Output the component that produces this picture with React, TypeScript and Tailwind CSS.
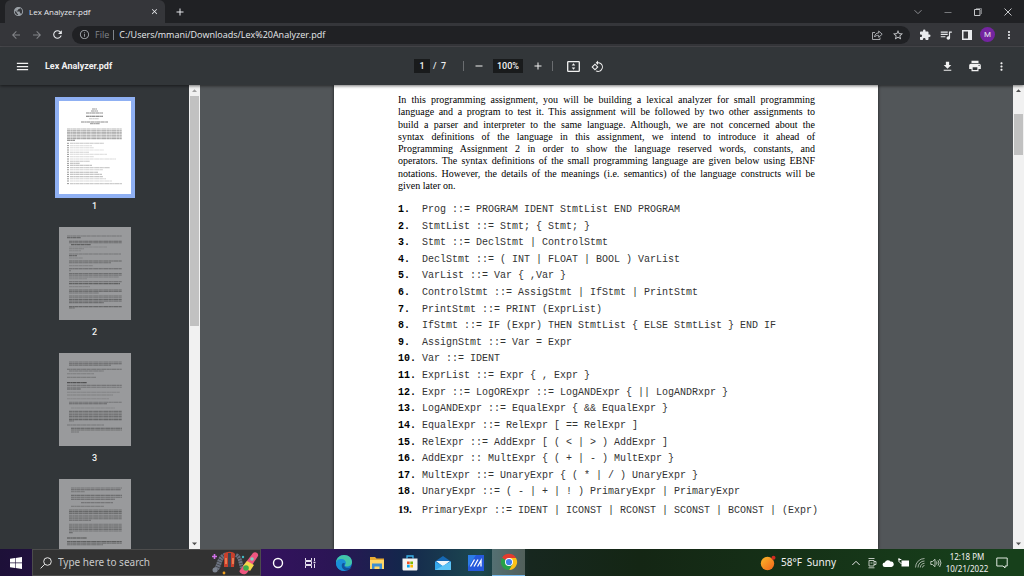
import { Fragment, type ReactNode } from "react";
import {
  MdAdd,
  MdArrowBack,
  MdArrowForward,
  MdClose,
  MdExtension,
  MdFileDownload,
  MdInfoOutline,
  MdMenu,
  MdMoreVert,
  MdOutlineRotate90DegreesCcw,
  MdPrint,
  MdPublic,
  MdQueueMusic,
  MdRefresh,
  MdRemove,
  MdStarBorder,
} from "react-icons/md";

const intro = [
  "In this programming assignment, you will be building a lexical analyzer for small programming",
  "language and a program to test it. This assignment will be followed by two other assignments to",
  "build a parser and interpreter to the same language. Although, we are not concerned about the",
  "syntax definitions of the language in this assignment, we intend to introduce it ahead of",
  "Programming Assignment 2 in order to show the language reserved words, constants, and",
  "operators. The syntax definitions of the small programming language are given below using EBNF",
  "notations. However, the details of the meanings (i.e. semantics) of the language constructs will be",
];

const rules = [
  "Prog ::= PROGRAM IDENT StmtList END PROGRAM",
  "StmtList ::= Stmt; { Stmt; }",
  "Stmt ::= DeclStmt | ControlStmt",
  "DeclStmt ::= ( INT | FLOAT | BOOL ) VarList",
  "VarList ::= Var { ,Var }",
  "ControlStmt ::= AssigStmt | IfStmt | PrintStmt",
  "PrintStmt ::= PRINT (ExprList)",
  "IfStmt ::= IF (Expr) THEN StmtList { ELSE StmtList } END IF",
  "AssignStmt ::= Var = Expr",
  "Var ::= IDENT",
  "ExprList ::= Expr { , Expr }",
  "Expr ::= LogORExpr ::= LogANDExpr { || LogANDRxpr }",
  "LogANDExpr ::= EqualExpr { && EqualExpr }",
  "EqualExpr ::= RelExpr [ == RelExpr ]",
  "RelExpr ::= AddExpr [ ( < | > ) AddExpr ]",
  "AddExpr :: MultExpr { ( + | - ) MultExpr }",
  "MultExpr ::= UnaryExpr { ( * | / ) UnaryExpr }",
  "UnaryExpr ::= ( - | + | ! ) PrimaryExpr | PrimaryExpr",
  "PrimaryExpr ::= IDENT | ICONST | RCONST | SCONST | BCONST | (Expr)",
];

// One strip of miniature text: x, width, y, opacity
type Strip = [number, number, number, number];

const thumbs: { page: number; strips: Strip[] }[] = [
  {
    page: 1,
    strips: [
      [33, 5, 8, 0.7], [32, 7, 10, 0.7], [27, 17, 12, 0.8], [27, 17, 15.3, 1], [30, 10, 17.7, 0.4],
      [22, 27, 21, 0.8], [31, 10, 22.6, 0.6],
      [8, 55, 28, 0.5], [8, 55, 29.6, 0.5], [8, 55, 31.2, 0.7], [8, 55, 32.8, 0.6], [8, 55, 34.4, 0.5],
      [8, 55, 36, 0.7], [8, 55, 37.6, 0.6], [8, 8, 39.4, 0.7],
      [11, 34, 42.3, 0.4], [11, 22, 44.6, 0.2], [11, 24, 46.8, 0.25], [11, 34, 49, 0.2], [11, 19, 51.2, 0.3],
      [11, 37, 53.4, 0.2], [11, 24, 55.6, 0.2], [11, 46, 58, 0.25], [11, 20, 60.2, 0.4], [11, 10, 62.4, 0.4],
      [11, 22, 64.4, 0.4], [11, 40, 66.6, 0.35], [11, 33, 68.8, 0.3], [11, 28, 71.2, 0.5], [11, 32, 73.4, 0.4],
      [11, 33, 75.6, 0.4], [11, 36, 77.8, 0.3], [11, 42, 80, 0.25], [11, 52, 82.6, 0.35],
    ],
  },
  {
    page: 2,
    strips: [
      [8, 55, 9, 0.5], [8, 14, 10.6, 0.7], [10, 53, 14.3, 0.7], [10, 53, 15.8, 0.6], [12, 20, 17.6, 0.8],
      [10, 38, 20, 0.25], [10, 15, 21.8, 0.4], [10, 12, 23.8, 0.3], [10, 52, 27, 0.5], [10, 8, 28.6, 0.7],
      [10, 14, 31, 0.3], [10, 53, 34, 0.7], [10, 42, 35.8, 0.6], [10, 24, 38.6, 0.3], [10, 53, 41.8, 0.7],
      [10, 2, 43.8, 0.5], [10, 53, 46.6, 0.6], [10, 53, 48.2, 0.5], [10, 50, 50, 0.4], [10, 18, 51.8, 0.3],
      [10, 53, 54.6, 0.5], [10, 51, 56.6, 0.8], [10, 21, 59.6, 0.3], [10, 53, 63, 0.7], [10, 53, 64.5, 0.6],
      [10, 30, 66, 0.5], [10, 53, 69, 0.6], [10, 53, 70.8, 0.5], [10, 53, 72.6, 0.7], [10, 53, 74.2, 0.5],
      [10, 35, 75.6, 0.6], [10, 53, 79.6, 0.7], [10, 6, 81, 0.6],
    ],
  },
  {
    page: 3,
    strips: [
      [10, 53, 9, 0.5], [10, 53, 10.8, 0.7], [10, 42, 12.2, 0.6], [8, 55, 16.2, 0.6], [10, 35, 18, 0.5],
      [8, 27, 20.8, 0.4], [8, 29, 24.4, 0.4], [8, 20, 29.6, 1], [8, 55, 32.4, 0.5], [8, 55, 34.2, 0.5],
      [8, 14, 36, 0.8], [8, 53, 39.2, 0.3], [8, 46, 42, 0.35], [8, 42, 45.8, 0.25], [10, 53, 49.2, 0.5],
      [10, 38, 50.8, 0.7], [12, 44, 55, 0.25], [10, 53, 58.4, 0.6], [10, 53, 60, 0.6], [10, 53, 61.6, 0.5],
      [10, 53, 63.4, 0.6], [10, 53, 65, 0.5], [10, 53, 66.6, 0.7], [10, 5, 68, 0.5], [8, 37, 72, 0.5],
      [12, 51, 75.2, 0.8], [12, 51, 77, 0.6], [12, 8, 79, 0.5],
    ],
  },
  {
    page: 4,
    strips: [
      [12, 51, 9, 0.5], [12, 50, 10.8, 0.7], [12, 14, 12.6, 0.4], [12, 51, 16.4, 0.6], [12, 51, 18.2, 0.6],
      [12, 44, 20.2, 0.7], [22, 32, 23.6, 0.5], [12, 33, 27.4, 0.4], [10, 53, 31, 0.6], [10, 53, 32.6, 0.7],
      [10, 53, 34.4, 0.6], [10, 53, 36.2, 0.5], [10, 53, 38, 0.7], [10, 53, 39.8, 0.6], [10, 22, 41.4, 0.5],
      [10, 53, 45.2, 0.5], [10, 53, 47, 0.7], [10, 53, 48.8, 0.6], [10, 53, 50.4, 0.6], [10, 53, 52, 0.5],
      [10, 4, 53.6, 0.6], [8, 20, 59, 1], [8, 55, 62.6, 0.8], [8, 55, 64.2, 0.6], [8, 36, 65.8, 0.6],
    ],
  },
];

function IconButton({ label, className, children }: { label: string; className: string; children: ReactNode }) {
  return (
    <button type="button" aria-label={label} className={`flex shrink-0 items-center justify-center ${className}`}>
      {children}
    </button>
  );
}

function TabStrip() {
  return (
    <div className="flex h-[23px] bg-[#202124] text-[#e8eaed]">
      <div className="ml-[5px] flex w-40 items-center rounded-t-md bg-[#35363a] pl-2 pr-1.5">
        <MdPublic className="size-[11px] text-[#9aa0a6]" />
        <span className="ml-[5px] flex-1 font-['Open_Sans',sans-serif] text-[8px] leading-3">Lex Analyzer.pdf</span>
        <IconButton label="Close tab" className="size-[9px]">
          <MdClose className="size-[9px]" />
        </IconButton>
      </div>
      <IconButton label="New tab" className="w-[30px]">
        <MdAdd className="size-3" />
      </IconButton>
      <div className="ml-auto flex pr-px text-[#c4c6c9]">
        <IconButton label="Search tabs" className="w-[30px]">
          <svg viewBox="0 0 8 8" className="size-2 text-[#8b8d91]" fill="none" stroke="currentColor">
            <path d="M.5 2.2 4 5.7 7.5 2.2" />
          </svg>
        </IconButton>
        <IconButton label="Minimize" className="w-[30px]">
          <svg viewBox="0 0 8 8" className="size-2 text-[#77797c]" stroke="currentColor">
            <path d="M.5 4.5h7" />
          </svg>
        </IconButton>
        <IconButton label="Restore" className="w-[30px]">
          <svg viewBox="0 0 8 8" className="size-2" fill="none" stroke="currentColor">
            <path d="M2 .5h5.500V6" stroke="#77797c" />
            <path d="M.5 1.500h5.500v6H.5z" />
          </svg>
        </IconButton>
        <IconButton label="Close" className="w-[30px]">
          <svg viewBox="0 0 8 8" className="size-2" stroke="currentColor">
            <path d="m.5.5 7 7m0-7-7 7" />
          </svg>
        </IconButton>
      </div>
    </div>
  );
}

function AddressBar() {
  return (
    <div className="flex h-6 items-center border-b border-[#4a4b4f] bg-[#35363a] px-[5px] text-[#e8eaed]">
      <IconButton label="Back" className="w-[21px] text-[#828387]">
        <MdArrowBack className="size-3" />
      </IconButton>
      <IconButton label="Forward" className="w-[21px] text-[#828387]">
        <MdArrowForward className="size-3" />
      </IconButton>
      <IconButton label="Reload" className="w-[21px]">
        <MdRefresh className="size-[13px]" />
      </IconButton>
      <div className="mx-1 flex h-[18px] flex-1 items-center rounded-full bg-[#202124] pl-[7px] pr-[2px] font-['Open_Sans',sans-serif] text-[9px]">
        <MdInfoOutline className="size-[11px] text-[#9aa0a6]" />
        <span className="ml-[5px] text-[#80848a]">File</span>
        <span className="mx-1 h-[10px] w-px bg-[#80848a]" />
        <input
          aria-label="Address"
          defaultValue="C:/Users/mmani/Downloads/Lex%20Analyzer.pdf"
          className="ml-px min-w-0 flex-1 bg-transparent outline-none"
        />
        <IconButton label="Share" className="w-[21px] text-[#b4b7bb]">
          <svg viewBox="0 0 12 12" className="size-3" fill="none" stroke="currentColor" strokeWidth=".9">
            <path d="M4 3.500H1.500v7h7.500V8.500" />
            <path d="M3.500 8c.3-2.700 1.800-4 4.200-4V2l3.500 3.200L7.700 8.300V6.400C5.800 6.300 4.500 6.700 3.500 8z" />
          </svg>
        </IconButton>
        <IconButton label="Bookmark this page" className="w-[21px] text-[#d0d2d5]">
          <MdStarBorder className="size-3" />
        </IconButton>
      </div>
      <IconButton label="Extensions" className="w-[21px]">
        <MdExtension className="size-3" />
      </IconButton>
      <IconButton label="Media controls" className="w-[21px]">
        <MdQueueMusic className="size-[14px]" />
      </IconButton>
      <IconButton label="Side panel" className="w-[21px]">
        <svg viewBox="0 0 10 10" className="size-[10px]">
          <path d="M0 0h10v10H0zM1.500 1.500v7H6v-7z" fill="currentColor" fillRule="evenodd" />
        </svg>
      </IconButton>
      <IconButton label="Profile" className="w-[21px]">
        <span className="flex size-[15px] items-center justify-center rounded-full bg-[#7424a0] font-['Roboto',sans-serif] text-[8px] leading-none">
          M
        </span>
      </IconButton>
      <IconButton label="Menu" className="w-[21px]">
        <MdMoreVert className="size-3" />
      </IconButton>
    </div>
  );
}

function PdfToolbar() {
  return (
    <div className="relative z-10 flex h-[38px] items-center bg-[#323639] font-['Roboto',sans-serif] text-[9px] font-medium text-[#f1f1f1] shadow-[0_1px_3px_rgba(0,0,0,0.55)]">
      <div className="flex flex-1 items-center pl-[15px]">
        <IconButton label="Toggle sidebar" className="size-[15px]">
          <MdMenu className="size-[15px]" />
        </IconButton>
        <h1 className="ml-[15px] leading-3 font-bold">Lex Analyzer.pdf</h1>
      </div>
      <div className="flex items-center pr-[7px]">
        <input aria-label="Page number" defaultValue="1" className="h-[14px] w-4 bg-[#191b1c] text-center outline-none" />
        <span className="ml-[3px] w-[30px] leading-3 whitespace-pre">{"/  7"}</span>
        <span className="h-[10px] w-px bg-[#6a6d70]" />
        <IconButton label="Zoom out" className="w-[29px]">
          <MdRemove className="size-3" />
        </IconButton>
        <input aria-label="Zoom level" defaultValue="100%" className="h-[14px] w-[30px] bg-[#191b1c] text-center outline-none" />
        <IconButton label="Zoom in" className="w-[29px]">
          <MdAdd className="size-3" />
        </IconButton>
        <span className="h-[10px] w-px bg-[#6a6d70]" />
        <IconButton label="Fit to page" className="ml-2 w-6">
          <svg viewBox="0 0 13 11" className="h-[11px] w-[13px]">
            <rect x=".7" y=".7" width="11.600" height="9.600" rx=".6" fill="none" stroke="currentColor" strokeWidth="1.300" />
            <path d="M6.500 2.200 8.300 4.500H4.700zM6.500 8.800 4.700 6.500h3.600z" fill="currentColor" />
          </svg>
        </IconButton>
        <IconButton label="Rotate counterclockwise" className="w-6">
          <MdOutlineRotate90DegreesCcw className="size-[13px]" />
        </IconButton>
      </div>
      <div className="flex flex-1 justify-end pr-[9px]">
        <IconButton label="Download" className="w-[27px]">
          <MdFileDownload className="size-[13px]" />
        </IconButton>
        <IconButton label="Print" className="w-[27px]">
          <MdPrint className="size-[14px]" />
        </IconButton>
        <IconButton label="More actions" className="w-[27px]">
          <MdMoreVert className="size-[13px]" />
        </IconButton>
      </div>
    </div>
  );
}

function Arrow({ down, dim }: { down?: boolean; dim?: boolean }) {
  return (
    <svg viewBox="0 0 11 11" className={`h-[11px] w-[11px] shrink-0 ${dim ? "text-[#a3a3a3]" : "text-[#505050]"}`}>
      <path d={down ? "M3 4.500h5L5.500 7.200z" : "M3 7h5L5.500 4.200z"} fill="currentColor" />
    </svg>
  );
}

function Sidebar() {
  return (
    <aside className="flex w-[200px] shrink-0 bg-[#323639]">
      <div className="flex flex-1 flex-col items-center overflow-hidden pt-3">
        {thumbs.map(({ page, strips }) => (
          <a key={page} href={`#page-${page}`} aria-label={`Page ${page}`} className="mb-[11px] flex shrink-0 flex-col items-center">
            <div className={page === 1 ? "border-4 border-[#8fb0f3] bg-white" : "border-4 border-transparent bg-[#999a9c] bg-clip-padding"}>
              <svg viewBox="0 0 72 93" className="h-[93px] w-[72px]">
                {strips.map(([x, w, y, o], i) => (
                  <Fragment key={i}>
                    <path d={`M${x} ${y}h${w}`} stroke="#333" strokeWidth="1.100" strokeDasharray="3.200 .3 1.500 .25 4.300 .35" opacity={o * 0.7} />
                    {page === 1 && i > 14 && <path d={`M8 ${y}h2`} stroke="#333" opacity=".5" />}
                  </Fragment>
                ))}
              </svg>
            </div>
            {/* the last thumbnail runs under the fold */}
            {page < thumbs.length && (
              <span className="mt-[2px] h-3 font-['Roboto',sans-serif] text-[9px] leading-3 font-medium text-[#f1f1f1]">{page}</span>
            )}
          </a>
        ))}
      </div>
      <div className="flex w-[11px] flex-col bg-[#f1f1f1]">
        <Arrow dim />
        <div className="mx-px h-[230px] bg-[#c1c1c1]" />
        <div className="flex-1" />
        <Arrow down />
      </div>
    </aside>
  );
}

function Document() {
  return (
    <main className="flex min-w-0 flex-1 bg-[#525659]">
      <div className="flex min-w-0 flex-1 justify-center pr-px">
        <article className="w-[544px] bg-white pl-16 pr-[63px] pt-[9px] text-black shadow-[0_0_3px_rgba(0,0,0,0.7)]">
          <div className="flex h-[98px] flex-col justify-between font-['Liberation_Serif',serif] text-[10px] leading-3">
            {intro.map((line) => (
              <p key={line} className="text-justify whitespace-nowrap [text-align-last:justify]">
                {line}
              </p>
            ))}
            <p>given later on.</p>
          </div>
          <ol className="mt-3 flex h-[313px] flex-col justify-between font-['Liberation_Mono',monospace] text-[10px] leading-3">
            {rules.map((rule, i) => (
              <li key={rule} className="flex items-baseline whitespace-pre text-[#333]">
                <span className={`w-6 shrink-0 font-bold text-black ${i === 18 ? "font-['Liberation_Serif',serif] text-[11px]" : ""}`}>
                  {i + 1}.
                </span>
                <span>{rule}</span>
              </li>
            ))}
          </ol>
        </article>
      </div>
      <div className="flex w-[11px] flex-col bg-[#f1f1f1]">
        <Arrow />
        <div className="mx-px mt-[18px] h-[41px] bg-[#c1c1c1]" />
        <div className="flex-1" />
        <Arrow down />
      </div>
    </main>
  );
}

function SearchArt() {
  return (
    <svg viewBox="0 0 50 26" className="h-[26px] w-[50px]">
      <path d="M4.500 4v5M2 6.500h5" stroke="#d071e8" strokeWidth="1.600" />
      <path d="M16 5C9 7 10 14 6 20" stroke="#6b7280" strokeWidth="5" strokeDasharray="2 .6" fill="none" />
      <path d="M26 5c4 2 4 6 6 13" stroke="#6b7280" strokeWidth="4" strokeDasharray="2 .6" fill="none" />
      <circle cx="5" cy="20" r="2.500" fill="#7d8490" />
      <path d="M14 4c2-3 9-3 11 0l-1 13H14z" fill="#c8402c" />
      <path d="M18 3h3v14h-3z" fill="#3d4450" />
      <path d="M16 8v6M23 8v6" stroke="#ef8d5b" strokeWidth="1.500" />
      <path d="M30 20 43 3c2-2 6 0 5 3L37 23c-3 3-9 0-7-3z" fill="#ee5680" />
      <path d="m33 16 7 5 4-6-7-4z" fill="#f5d64b" />
      <circle cx="36" cy="18" r="2.800" fill="#3fae49" />
      <circle cx="42" cy="9" r="1.800" fill="#7fd0c2" />
      <circle cx="33" cy="7" r="1.200" fill="#43b9c4" />
      <circle cx="14" cy="23" r="1.400" fill="#f0a020" />
    </svg>
  );
}

const apps: { name: string; art: ReactNode }[] = [
  {
    name: "Cortana",
    art: <circle cx="9" cy="9" r="4.500" fill="none" stroke="#fff" strokeWidth="1.400" />,
  },
  {
    name: "Task View",
    art: (
      <g fill="none" stroke="#e6e0ee">
        <path d="M3.500 4v2.500h6V4M3.500 14v-2.500h6V14M3.500 7.500h6v3h-6zM12.500 4v3M12.500 10v4" />
        <path d="M11.500 8.500h2" strokeWidth="1.500" />
      </g>
    ),
  },
  {
    name: "Microsoft Edge",
    art: (
      <>
        <circle cx="9" cy="9" r="8" fill="#1479cc" />
        <path d="M1 9C1 4 5 1 9 1c5 0 8 3.300 8 7 0 3-2.500 4.500-5 4.500-1.800 0-2.600-.8-2-1.800.9-1.600 0-4.200-3-4.200C4 6.500 1.500 7.500 1 9z" fill="#43c6a8" />
        <path d="M1 9c.5-3 3-4.500 6-4 3.400.5 4.700 3.500 3.200 5.600C9 9 6.800 10 7 12.500c.2 2 2 3.500 4.500 4C6 18 1 14.500 1 9z" fill="#1a8fd8" />
        <path d="M7 10c-1 3 1 6 4.500 6.500 2.200-.2 4-1.500 5-3.300-3 1.500-6.500 1-7.300-1.200-.4-1 .3-2 .7-2.600C9 8.600 7.500 8.900 7 10z" fill="#12539c" />
      </>
    ),
  },
  {
    name: "File Explorer",
    art: (
      <>
        <path d="M2 3h5l1.500 1.500H16V15H2z" fill="#e8ab33" />
        <path d="M2 6h14v9H2z" fill="#ffd667" />
        <path d="M4 9.500h10V15h-2.500v-2.500h-5V15H4z" fill="#3f8fd2" />
      </>
    ),
  },
  {
    name: "Microsoft Store",
    art: (
      <>
        <path d="M6 4.500V2h6v2.500" fill="none" stroke="#3bb4ea" strokeWidth="1.300" />
        <path d="M1.500 4.500h15V15c0 1-.6 1.500-1.500 1.500H3c-.9 0-1.500-.5-1.500-1.500z" fill="#f3f3f3" />
        <path d="M6 7.500h2.700v2.700H6z" fill="#f25022" />
        <path d="M9.300 7.500H12v2.700H9.300z" fill="#7fba00" />
        <path d="M6 10.800h2.700v2.700H6z" fill="#00a4ef" />
        <path d="M9.300 10.800H12v2.700H9.300z" fill="#ffb900" />
      </>
    ),
  },
  {
    name: "Mail",
    art: (
      <>
        <path d="M1 7.500 9 2l8 5.500V16H1z" fill="#1668b3" />
        <path d="M2 7h14l-7 5.500z" fill="#f2f5f8" />
        <path d="M1 7.500 9 12l8-4.500V16H1z" fill="#35a6ea" />
        <path d="m1 16 16-8.500V16z" fill="#5cc3f5" />
      </>
    ),
  },
  {
    name: "MyASUS",
    art: (
      <>
        <path d="M1 1h16v16H1z" fill="#2659dc" />
        <path d="M1 1h8L1 13z" fill="#2c7ce8" />
        <path d="m3.500 12.500 4-7M7 12.500l4-7M10.500 12.500l3.500-6v6" stroke="#fff" strokeWidth="1.300" fill="none" />
      </>
    ),
  },
  {
    name: "Google Chrome",
    art: (
      <>
        <path d="M9 9 2 5a8 8 0 0 1 14 0z" fill="#e33b2e" />
        <path d="M9 5h7a8 8 0 0 1-7 12l3.500-6z" fill="#fbc116" />
        <path d="M2 5a8 8 0 0 0 7 12l3.500-6L9 9z" fill="#27a04a" />
        <circle cx="9" cy="9" r="4" fill="#fff" />
        <circle cx="9" cy="9" r="3.100" fill="#3f7fee" />
      </>
    ),
  },
];

function Taskbar() {
  return (
    <footer className="flex h-[27px] shrink-0 items-stretch bg-[linear-gradient(90deg,#1d1038_0px,#34125e_261px,#2b1555_330px,#14264c_400px,#1c4850_480px,#17271f_530px,#142614_640px,#17401b_1000px)] font-['Noto_Sans',sans-serif] text-[#f2f2f2]">
      <IconButton label="Start" className="w-8">
        <svg viewBox="0 0 12 12" className="size-3" fill="#fff">
          <path d="M0 1.700 5 1v4.600H0zM5.600.9 12 0v5.600H5.600zM0 6.300h5V11l-5-.7zM5.600 6.300H12V12l-6.400-.9z" />
        </svg>
      </IconButton>
      <label className="flex w-[229px] items-center border border-[#4c4c4c] bg-[#323232] pl-[7px]">
        <svg viewBox="0 0 12 12" className="size-3" fill="none" stroke="#e6e6e6">
          <circle cx="7.500" cy="4.500" r="3.800" />
          <path d="M4.700 7.300.6 11.400" />
        </svg>
        <input
          aria-label="Type here to search"
          placeholder="Type here to search"
          className="ml-[6px] min-w-0 flex-1 bg-transparent text-[10px] outline-none placeholder:text-[#c9c9c9]"
        />
        <SearchArt />
      </label>
      {apps.map(({ name, art }) => (
        <IconButton
          key={name}
          label={name}
          className={name === "Google Chrome" ? "w-[33px] border-b border-[#76b9ed] bg-white/25" : "w-[33px]"}
        >
          <svg viewBox="0 0 18 18" className="size-[18px]">
            {art}
          </svg>
        </IconButton>
      ))}
      <div className="ml-auto flex items-center pr-[14px]">
        <button type="button" className="flex items-center gap-[5px] text-[10px]">
          <svg viewBox="0 0 16 16" className="size-4">
            <defs>
              <linearGradient id="sun" x1="0" y1="0" x2="1" y2="1">
                <stop offset="0" stopColor="#fbb829" />
                <stop offset="1" stopColor="#f0641a" />
              </linearGradient>
            </defs>
            <circle cx="7.500" cy="8.500" r="6.700" fill="url(#sun)" />
            <circle cx="13.500" cy="2.800" r="2" fill="#cf2b21" />
          </svg>
          <span>58°F</span>
          <span>Sunny</span>
        </button>
        <IconButton label="Show hidden icons" className="ml-3 w-4">
          <svg viewBox="0 0 8 8" className="size-2" fill="none" stroke="#e5e5e5">
            <path d="M.3 6 4 2.300 7.700 6" />
          </svg>
        </IconButton>
        <div className="flex items-center" role="group" aria-label="System tray">
          {[
            <g key="eject" fill="none" stroke="#cfd6cf" strokeWidth=".9">
              <path d="M2.500 1.500h6M3 3.500h5v5.500H3zM8 4.500h2v3H8M2.500 10.800h6M4.500 6h2" />
            </g>,
            <path key="cloud" d="M3 10a2.300 2.300 0 0 1-.2-4.600A3.200 3.200 0 0 1 8.500 4.600 2.700 2.700 0 0 1 9.500 10z" fill="#fff" />,
            <g key="battery" fill="#fff">
              <path d="M3.500 3.500H11v6H3.500z" />
              <path d="M.5 2.500h2.800M1 1v3.500L3.500 7" stroke="#fff" fill="none" />
            </g>,
            <g key="wifi" fill="none" stroke="#aebaae" strokeWidth=".9">
              <path d="M1.500 10.500A9 9 0 0 1 10.500 1.500M4 10.500a6.500 6.500 0 0 1 6.500-6.500M6.300 10.500a4.200 4.200 0 0 1 4.200-4.200M8.500 10.500a2 2 0 0 1 2-2" />
            </g>,
            <g key="sound" fill="none" stroke="#e0e6e0" strokeWidth=".8">
              <path d="M.8 4.500h1.700L5 2.300v7.400L2.500 7.500H.8zM6.500 4.500q1 1.500 0 3M8 3.300q2 2.700 0 5.400M9.600 2q2.800 4 0 8" />
            </g>,
          ].map((glyph, i) => (
            <button key={i} type="button" aria-label={["Eject", "OneDrive", "Battery", "Network", "Volume"][i]} className="flex w-4 justify-center">
              <svg viewBox="0 0 12 12" className="size-3">
                {glyph}
              </svg>
            </button>
          ))}
        </div>
        <time className="flex w-[46px] flex-col items-center text-[8px] leading-3">
          <span>12:18 PM</span>
          <span>10/21/2022</span>
        </time>
        <IconButton label="Notifications" className="ml-1 w-4">
          <svg viewBox="0 0 12 12" className="size-3" fill="none" stroke="#dfe8df">
            <path d="M.8 1h10.400v8H9v2L7 9H.8z" />
          </svg>
        </IconButton>
      </div>
    </footer>
  );
}

export default function App() {
  return (
    <div className="flex h-screen flex-col overflow-hidden bg-[#323639]">
      <header>
        <TabStrip />
        <AddressBar />
      </header>
      <PdfToolbar />
      <div className="flex min-h-0 flex-1">
        <Sidebar />
        <Document />
      </div>
      <Taskbar />
    </div>
  );
}
